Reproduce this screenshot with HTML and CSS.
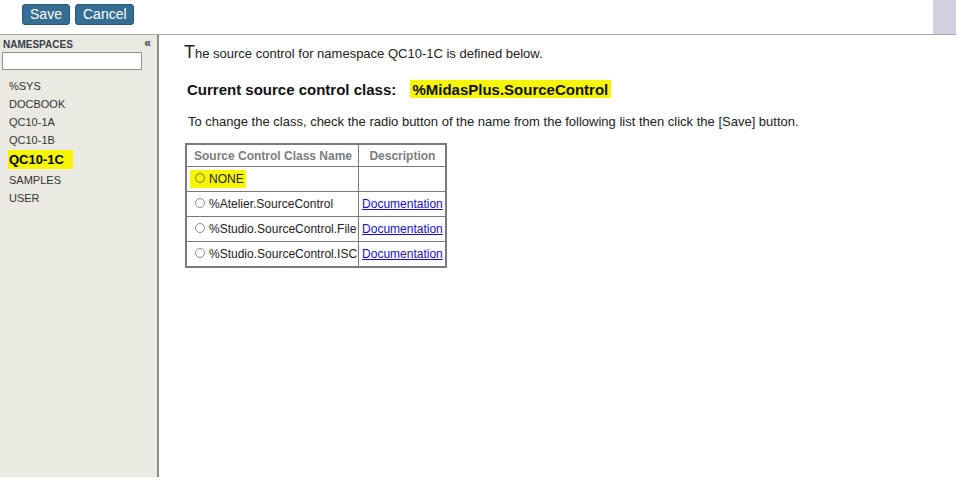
FILE: index.html
```html
<!DOCTYPE html>
<html>
<head>
<meta charset="utf-8">
<link rel="stylesheet" href="styles.css">
</head>
<body>
<div class="header">
  <div class="buttons">
    <button class="btn">Save</button>
    <button class="btn">Cancel</button>
  </div>
  <div class="corner"></div>
</div>
<div class="body">
  <div class="sidebar">
    <div class="side-top">
      <span class="side-title">NAMESPACES</span>
      <span class="collapse">&laquo;</span>
    </div>
    <input class="filter" type="text">
    <ul class="nslist">
      <li>%SYS</li>
      <li>DOCBOOK</li>
      <li>QC10-1A</li>
      <li>QC10-1B</li>
      <li class="current"><span class="hl">QC10-1C</span></li>
      <li>SAMPLES</li>
      <li>USER</li>
    </ul>
  </div>
  <div class="main">
    <p class="intro"><span class="bigT">T</span>he source control for namespace QC10-1C is defined below.</p>
    <h2 class="current-class">Current source control class: <span class="hl cls">%MidasPlus.SourceControl</span></h2>
    <p class="instr">To change the class, check the radio button of the name from the following list then click the [Save] button.</p>
    <table class="sc">
      <thead>
        <tr><th>Source Control Class Name</th><th>Description</th></tr>
      </thead>
      <tbody>
        <tr><td><span class="hl nonehl"><span class="radio"></span>NONE</span></td><td></td></tr>
        <tr><td><span class="radio"></span>%Atelier.SourceControl</td><td><a href="#">Documentation</a></td></tr>
        <tr><td><span class="radio"></span>%Studio.SourceControl.File</td><td><a href="#">Documentation</a></td></tr>
        <tr><td><span class="radio"></span>%Studio.SourceControl.ISC</td><td><a href="#">Documentation</a></td></tr>
      </tbody>
    </table>
  </div>
</div>
</body>
</html>
```

FILE: styles.css
```css
html, body {
  margin: 0;
  padding: 0;
  background: #ffffff;
  font-family: "Liberation Sans", Arial, sans-serif;
  color: #222;
}
.header {
  height: 34px;
  border-bottom: 1px solid #a8a8a8;
  display: flex;
  justify-content: space-between;
  width: 956px;
}
.buttons {
  display: flex;
  gap: 5px;
  padding: 4px 0 0 22px;
  align-items: flex-start;
}
.btn {
  font-family: "Liberation Sans", Arial, sans-serif;
  font-size: 14px;
  color: #ffffff;
  background: #356d94;
  border: 1px solid #2a5675;
  border-radius: 3px;
  height: 21px;
  padding: 0 7px;
  line-height: 19px;
}
.btn:first-child { width: 48px; }
.btn:last-child { width: 59px; }
.corner {
  width: 23px;
  height: 34px;
  background: #d1cfe0;
}
.body {
  display: flex;
  align-items: flex-start;
}
.sidebar {
  width: 157px;
  height: 442px;
  background: #eae9e2;
  border-right: 2px solid #8a8a8a;
  box-sizing: content-box;
}
.side-top {
  display: flex;
  justify-content: space-between;
  padding: 4px 6px 0 3px;
  height: 13px;
}
.side-title {
  font-size: 10px;
  font-weight: bold;
  color: #3a3f4a;
  line-height: 12px;
}
.collapse {
  font-size: 12px;
  line-height: 8px;
  color: #3a3f4a;
  font-weight: bold;
}
.filter {
  display: block;
  box-sizing: border-box;
  margin: 0 0 0 2px;
  width: 140px;
  height: 18px;
  border: 1px solid #8f8f8f;
  background: #fff;
  padding: 0;
}
.nslist {
  list-style: none;
  margin: 7px 0 0 0;
  padding: 0 0 0 9px;
  font-size: 11px;
  color: #333;
}
.nslist li {
  height: 18px;
  line-height: 18px;
}
.nslist li.current {
  font-size: 13px;
  font-weight: bold;
  color: #000;
  height: 22px;
  line-height: 22px;
}
.hl {
  background: #f6f600;
}
.nslist li.current .hl {
  padding: 2px 9px 2px 1px;
  margin-left: -1px;
}
.main {
  padding-left: 25px;
  flex: 1;
}
.intro {
  margin: 8px 0 0 0;
  font-size: 13px;
  line-height: 19px;
  color: #222;
}
.bigT {
  font-size: 18px;
}
.current-class {
  margin: 17px 0 0 3px;
  font-size: 15px;
  font-weight: bold;
  color: #111;
  line-height: 20px;
}
.cls {
  margin-left: 10px;
  padding: 1px 3px 0 2px;
  font-size: 15px;
}
.instr {
  margin: 14px 0 0 4px;
  font-size: 13px;
  line-height: 16px;
  color: #222;
}
.sc {
  margin: 13px 0 0 1px;
  border-collapse: collapse;
  border: 2px solid #7b7b7b;
  font-size: 12px;
}
.sc th, .sc td {
  border: 1px solid #7b7b7b;
  height: 24px;
  text-align: left;
  white-space: nowrap;
}
.sc th {
  color: #7d7d7d;
  font-weight: bold;
  font-size: 12px;
  height: 21px;
  padding: 0 6px 0 7px;
}
.sc th:last-child { text-align: center; }
.sc td:last-child { padding: 0 2px 0 3px; }
.sc td:first-child { padding: 0 1px 0 8px; }
.radio {
  display: inline-block;
  width: 8px;
  height: 8px;
  border: 1px solid #8a8a8a;
  border-radius: 50%;
  margin-right: 4px;
  vertical-align: 0px;
  background: #fff;
}
.nonehl {
  display: inline-block;
  font-size: 12px;
  line-height: 14px;
  padding: 2px 2px 2px 2px;
  margin-left: -5px;
}
.nonehl .radio {
  background: transparent;
  border-color: #7a7a30;
  margin-left: 3px;
}
.sc a {
  color: #1a0dcc;
  text-decoration: underline;
}
```
